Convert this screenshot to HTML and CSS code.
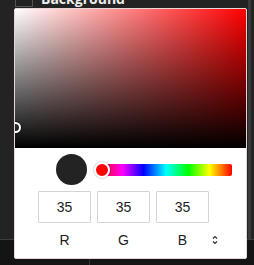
FILE: index.html
```html
<!DOCTYPE html>
<html lang="en">
<head>
    <meta charset="UTF-8">
    <meta name="viewport" content="width=device-width, initial-scale=1.0">
    <title>Color Picker</title>
    <link rel="stylesheet" href="styles.css">
</head>
<body>
    <div class="panel">
        <div class="panel-head">
            <span class="chip"></span>
            <span class="title">Background</span>
        </div>
        <div class="scroll"></div>
    </div>
    <div class="footer">
        <div class="footer-col"></div>
    </div>

    <div class="picker">
        <div class="sv-area">
            <span class="sv-cursor"></span>
        </div>

        <div class="controls">
            <div class="row-top">
                <div class="swatch"></div>
                <div class="hue">
                    <span class="hue-thumb"></span>
                </div>
            </div>

            <div class="row-inputs">
                <input class="channel" type="text" value="35">
                <input class="channel" type="text" value="35">
                <input class="channel" type="text" value="35">
            </div>

            <div class="row-labels">
                <span class="label">R</span>
                <span class="label">G</span>
                <span class="label">B</span>
                <span class="toggle">
                    <svg width="6" height="10" viewBox="0 0 6 10">
                        <path d="M1 3.5 L3 1.5 L5 3.5" fill="none" stroke="#333" stroke-width="1.2"/>
                        <path d="M1 6.5 L3 8.5 L5 6.5" fill="none" stroke="#333" stroke-width="1.2"/>
                    </svg>
                </span>
            </div>
        </div>
    </div>
</body>
</html>
```

FILE: styles.css
```css
* {
    margin: 0;
    padding: 0;
    box-sizing: border-box;
}

body {
    width: 254px;
    height: 265px;
    overflow: hidden;
    background-color: #141414;
    font-family: 'Liberation Sans', Arial, sans-serif;
}

.panel {
    height: 240px;
    display: flex;
    background-color: #232323;
    border-bottom: 1px solid #3d3d3d;
}

.panel-head {
    display: flex;
    align-items: flex-end;
    gap: 8px;
    height: 17px;
    margin-top: -10px;
    padding-left: 15px;
}

.chip {
    width: 18px;
    height: 17px;
    background-color: #222;
    border: 1px solid #555;
}

.title {
    color: #eee;
    font-family: 'Open Sans', 'Noto Sans', sans-serif;
    font-weight: bold;
    font-size: 14px;
    line-height: 14px;
    margin-bottom: 1px;
}

.scroll {
    width: 3px;
    margin-left: auto;
    margin-right: 3px;
    background-color: #3a3a3a;
}

.footer {
    height: 25px;
    display: flex;
}

.footer-col {
    width: 90px;
    border-right: 1px solid #333;
}

.picker {
    position: absolute;
    top: 8px;
    left: 14px;
    width: 233px;
    height: 251px;
    background-color: #fff;
    border: 1px solid #e8d6d6;
    border-radius: 2px;
    overflow: hidden;
}

.sv-area {
    position: relative;
    height: 139px;
    overflow: hidden;
    background: linear-gradient(to top, #000, rgba(0, 0, 0, 0)),
                linear-gradient(to right, #fff, #f00);
}

.sv-cursor {
    position: absolute;
    left: -5px;
    top: 113px;
    width: 11px;
    height: 11px;
    border: 2px solid #fff;
    border-radius: 50%;
    box-shadow: 0 0 0 1px rgba(0, 0, 0, 0.4);
}

.controls {
    padding-top: 6px;
}

.row-top {
    display: flex;
    align-items: center;
    gap: 13px;
    padding-left: 41px;
}

.swatch {
    width: 31px;
    height: 31px;
    border-radius: 50%;
    background-color: #232323;
}

.hue {
    position: relative;
    width: 132px;
    height: 12px;
    border-radius: 2px;
    background: linear-gradient(to right, #f00 0%, #f0f 17%, #00f 33%, #0ff 50%, #0f0 67%, #ff0 83%, #f00 100%);
}

.hue-thumb {
    position: absolute;
    left: -6px;
    top: -2px;
    width: 16px;
    height: 16px;
    border-radius: 50%;
    background-color: #f00;
    border: 2px solid #fff;
    box-shadow: 0 0 1px 1px rgba(0, 0, 0, 0.15);
}

.row-inputs,
.row-labels {
    display: flex;
    gap: 6px;
    padding-left: 23px;
}

.row-inputs {
    margin-top: 6px;
}

.channel {
    width: 53px;
    height: 32px;
    border: 1px solid #d4d4d4;
    border-radius: 1px;
    text-align: center;
    font-family: 'Liberation Sans', Arial, sans-serif;
    font-size: 14px;
    color: #222;
    background-color: #fff;
    outline: none;
}

.row-labels {
    margin-top: 9px;
    align-items: center;
}

.label {
    width: 53px;
    text-align: center;
    font-size: 14px;
    line-height: 16px;
    color: #222;
}

.toggle {
    display: flex;
    margin-left: -3px;
}
```
